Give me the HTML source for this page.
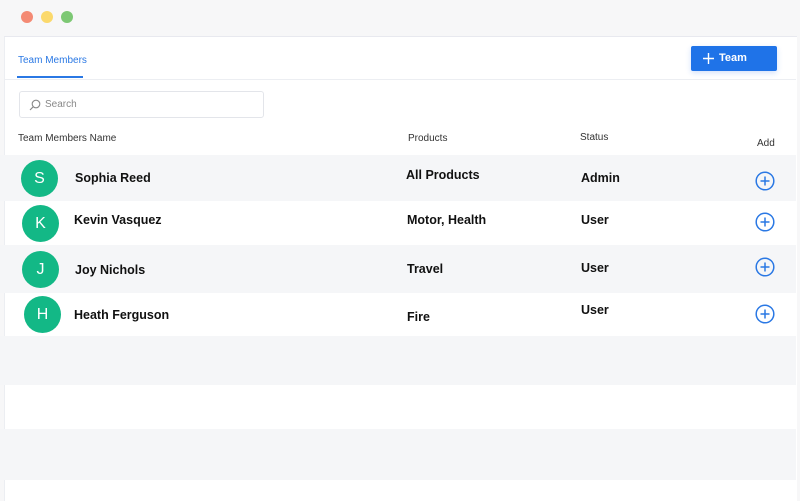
<html><head><style>
body{margin:0;width:800px;height:500px;background:#f7f7f8;font-family:"Liberation Sans",sans-serif;position:relative;overflow:hidden}
.a{position:absolute}
.dot{position:absolute;top:11px;width:12px;height:12px;border-radius:50%}
.row{position:absolute;left:0;width:796px}
.av{position:absolute;width:37px;height:37px;border-radius:50%;background:#13b886;color:#fff;font-size:16px;text-align:center;line-height:37px}
.t{position:absolute;font-size:12.5px;font-weight:bold;color:#111}
.h{position:absolute;font-size:10px;color:#333}
.plus{position:absolute;width:20px;height:20px}
</style></head><body>
<div class="dot" style="left:21px;background:#f48a74"></div>
<div class="dot" style="left:41px;background:#fbd96c"></div>
<div class="dot" style="left:61px;background:#7dc874"></div>
<div class="a" style="left:4px;top:36px;width:792px;height:464px;background:#fff;border-top:1px solid #e8e9ef;border-left:1px solid #eceef2"></div>
<div class="a" style="left:4px;top:79px;width:792px;height:1px;background:#eceef2"></div>
<div class="a" style="left:18px;top:55px;font-size:10px;color:#2a78e4">Team Members</div>
<div class="a" style="left:17px;top:76px;width:66px;height:2px;background:#2a78e4"></div>
<div class="a" style="left:691px;top:46px;width:86px;height:25px;background:#1f73e8;border-radius:2px;box-shadow:0 2px 6px rgba(30,100,230,.2);color:#fff;font-size:11px;font-weight:bold;line-height:25px"><svg style="position:absolute;left:12px;top:7px" width="11" height="11"><path d="M5.5 0V11M0 5.5H11" stroke="#fff" stroke-width="1.4"/></svg><span style="position:absolute;left:28px">Team</span></div>
<div class="a" style="left:19px;top:91px;width:243px;height:25px;border:1px solid #e3e5ea;border-radius:3px;font-size:10px;color:#888;line-height:25px"><svg style="position:absolute;left:9px;top:7px" width="12" height="12"><circle cx="7" cy="5" r="3.8" fill="none" stroke="#888" stroke-width="1.1"/><path d="M4.3 7.7L1 11" stroke="#888" stroke-width="1.1"/></svg><span style="position:absolute;left:25px">Search</span></div>
<div class="h" style="left:18px;top:133px">Team Members Name</div>
<div class="h" style="left:408px;top:133px">Products</div>
<div class="h" style="left:580px;top:132px">Status</div>
<div class="h" style="left:757px;top:138px">Add</div>
<div class="row" style="top:155px;height:46px;background:#f5f6f8"></div>
<div class="row" style="top:245px;height:48px;background:#f5f6f8"></div>
<div class="row" style="top:336px;height:49px;background:#f5f6f8"></div>
<div class="row" style="top:429px;height:51px;background:#f5f6f8"></div>
<div class="av" style="left:21px;top:160px">S</div><div class="t" style="left:75px;top:171px">Sophia Reed</div><div class="t" style="left:406px;top:168px">All Products</div><div class="t" style="left:581px;top:171px">Admin</div>
<svg class="plus" style="left:755px;top:171px"><circle cx="10" cy="10" r="8.8" fill="none" stroke="#2a78e4" stroke-width="1.5"/><path d="M10 5.5V14.5M5.5 10H14.5" stroke="#2a78e4" stroke-width="1.5"/></svg>
<div class="av" style="left:22px;top:205px">K</div><div class="t" style="left:74px;top:213px">Kevin Vasquez</div><div class="t" style="left:407px;top:213px">Motor, Health</div><div class="t" style="left:581px;top:213px">User</div>
<svg class="plus" style="left:755px;top:212px"><circle cx="10" cy="10" r="8.8" fill="none" stroke="#2a78e4" stroke-width="1.5"/><path d="M10 5.5V14.5M5.5 10H14.5" stroke="#2a78e4" stroke-width="1.5"/></svg>
<div class="av" style="left:22px;top:251px">J</div><div class="t" style="left:75px;top:263px">Joy Nichols</div><div class="t" style="left:407px;top:262px">Travel</div><div class="t" style="left:581px;top:261px">User</div>
<svg class="plus" style="left:755px;top:257px"><circle cx="10" cy="10" r="8.8" fill="none" stroke="#2a78e4" stroke-width="1.5"/><path d="M10 5.5V14.5M5.5 10H14.5" stroke="#2a78e4" stroke-width="1.5"/></svg>
<div class="av" style="left:24px;top:296px">H</div><div class="t" style="left:74px;top:308px">Heath Ferguson</div><div class="t" style="left:407px;top:310px">Fire</div><div class="t" style="left:581px;top:303px">User</div>
<svg class="plus" style="left:755px;top:304px"><circle cx="10" cy="10" r="8.8" fill="none" stroke="#2a78e4" stroke-width="1.5"/><path d="M10 5.5V14.5M5.5 10H14.5" stroke="#2a78e4" stroke-width="1.5"/></svg>
</body></html>
